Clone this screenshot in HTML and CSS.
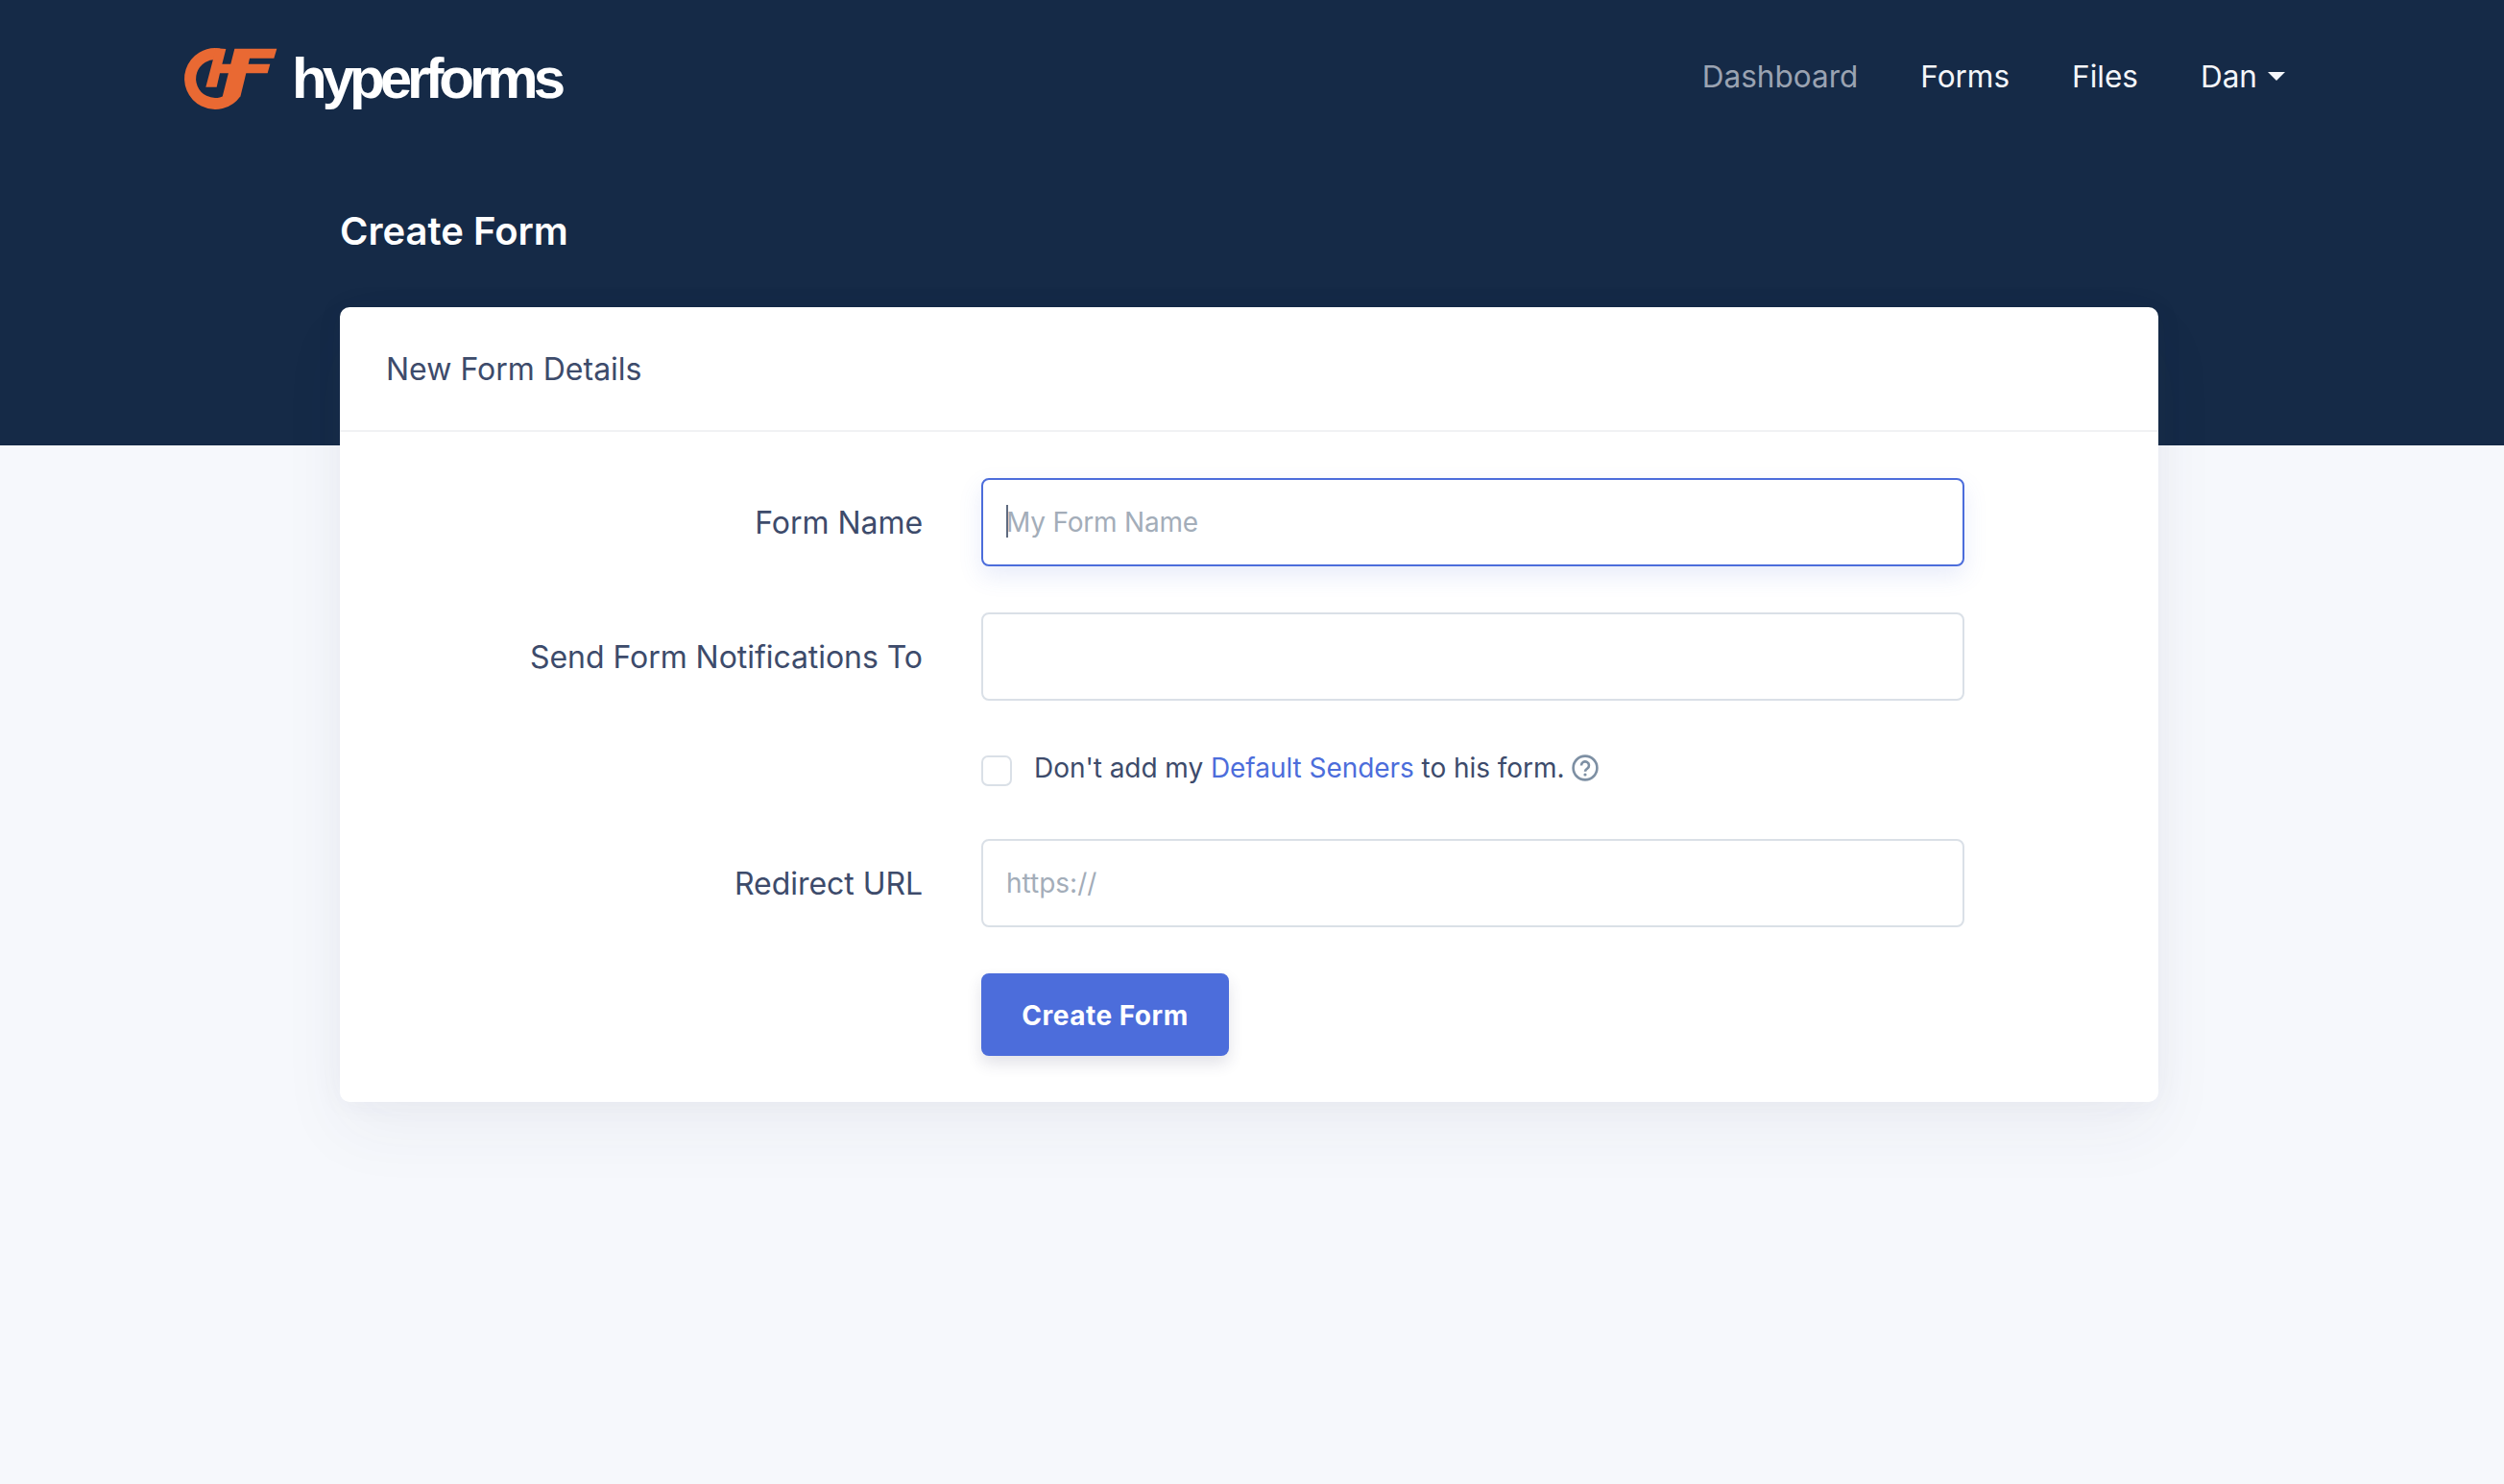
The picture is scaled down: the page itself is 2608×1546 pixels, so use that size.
FILE: index.html
```html
<!DOCTYPE html>
<html lang="en">
<head>
  <meta charset="UTF-8">
  <meta name="viewport" content="width=device-width, initial-scale=1.0">
  <title>Create Form - hyperforms</title>
  <link rel="stylesheet" href="styles.css">
</head>
<body>
  <header class="hero">
    <nav class="topbar">
      <a class="brand" href="#">
        <svg class="brand-mark" viewBox="0 0 330 222" aria-hidden="true">
          <path class="mark-stroke" d="M130 37 A78 78 0 1 0 181 159"/>
          <path class="mark-fill" d="M120 19 L151 21 L139 68 L178 68 L170 97 L132 97 L122 140 L88 140 Z"/>
          <path class="mark-fill" d="M178 20 L310 20 L301 50 L225 50 L221 68 L289 68 L281 97 L214 97 L196 170 L140 170 Z"/>
        </svg>
        <span class="brand-name">hyperforms</span>
      </a>
      <ul class="nav-links">
        <li><a class="nav-link muted" href="#">Dashboard</a></li>
        <li><a class="nav-link" href="#">Forms</a></li>
        <li><a class="nav-link" href="#">Files</a></li>
        <li><a class="nav-link dropdown" href="#">Dan</a></li>
      </ul>
    </nav>
    <h1 class="page-title">Create Form</h1>
  </header>

  <main class="card">
    <div class="card-header">New Form Details</div>
    <form class="card-body">
      <div class="form-row">
        <label class="form-label" for="form-name">Form Name</label>
        <div class="field">
          <input class="form-input focused" type="text" id="form-name" placeholder="My Form Name">
          <span class="caret"></span>
        </div>
      </div>
      <div class="form-row">
        <label class="form-label" for="notify-to">Send Form Notifications To</label>
        <input class="form-input" type="text" id="notify-to">
      </div>
      <div class="form-row">
        <div class="check-row">
          <input class="check" type="checkbox" id="no-senders">
          <label for="no-senders">Don't add my <a href="#">Default Senders</a> to his form.</label>
          <svg class="help-icon" viewBox="0 0 28 28" aria-hidden="true">
            <circle cx="14" cy="14" r="12.4"/>
            <path d="M10 11.4a4 4 0 1 1 6.2 3.3c-1.5.9-2.2 1.4-2.2 3"/>
            <circle class="dot" cx="14" cy="21" r="1.6"/>
          </svg>
        </div>
      </div>
      <div class="form-row">
        <label class="form-label" for="redirect-url">Redirect URL</label>
        <input class="form-input" type="text" id="redirect-url" placeholder="https://">
      </div>
      <div class="form-row last">
        <button class="submit-btn" type="button">Create Form</button>
      </div>
    </form>
  </main>
</body>
</html>
```

FILE: styles.css
```css
body {
  margin: 0;
  min-height: 1546px;
  background-color: #f6f8fc;
  color: #3d4b6b;
  font-family: Inter, "Noto Sans", sans-serif;
  font-size: 32px;
  overflow: hidden;
}

a {
  text-decoration: none;
}

.hero {
  height: 464px;
  box-sizing: border-box;
  background-color: #152a47;
  color: white;
}

.topbar {
  display: flex;
  align-items: center;
  justify-content: space-between;
  height: 162px;
  padding: 0 228px 0 185px;
}

.brand {
  display: flex;
  align-items: center;
  gap: 9px;
  color: white;
}

.brand-mark {
  width: 110px;
  height: 74px;
}

.mark-stroke {
  fill: none;
  stroke: #e96933;
  stroke-width: 36;
}

.mark-fill {
  fill: #e96933;
}

.brand-name {
  font-family: "Liberation Sans", Arial, sans-serif;
  font-size: 60px;
  font-weight: bold;
  letter-spacing: -5px;
}

.nav-links {
  display: flex;
  gap: 65px;
  margin: 0 0 3px;
  padding: 0;
  list-style: none;
  font-size: 31.5px;
}

.nav-link {
  color: #f4f6fa;
}

.nav-link.muted {
  color: #9aa3b2;
}

.dropdown::after {
  content: "";
  display: inline-block;
  margin-left: 11px;
  vertical-align: 7px;
  border-top: 9px solid #f4f6fa;
  border-left: 9.5px solid transparent;
  border-right: 9.5px solid transparent;
}

.page-title {
  margin: 54px 0 0 354px;
  font-size: 40px;
  font-weight: 600;
  line-height: 50px;
}

.card {
  width: 1894px;
  margin: -144px 0 0 354px;
  position: relative;
  background-color: white;
  border-radius: 10px;
  box-shadow: 0 30px 70px rgba(50, 50, 93, 0.05), 0 0 30px rgba(50, 50, 93, 0.05);
}

.card-header {
  height: 128px;
  padding: 0 48px;
  line-height: 130px;
  border-bottom: 2px solid #f1f2f4;
}

.card-body {
  padding: 48px;
}

.form-row {
  display: grid;
  grid-template-columns: 559px 1024px;
  column-gap: 61px;
  align-items: center;
  margin-bottom: 48px;
}

.form-row.last {
  margin-bottom: 0;
}

.form-label {
  text-align: right;
  letter-spacing: -0.05px;
}

.field {
  position: relative;
}

.form-input {
  display: block;
  width: 100%;
  height: 92px;
  box-sizing: border-box;
  padding: 0 24px;
  background-color: white;
  border: 2px solid #dae0e7;
  border-radius: 8px;
  color: #3d4b6b;
  font-family: inherit;
  font-size: 28px;
  outline: none;
}

.form-input::placeholder {
  color: #a3adb9;
  opacity: 1;
}

.form-input.focused {
  border-color: #4c6ddb;
  box-shadow: 0 10px 24px rgba(76, 109, 219, 0.13);
  letter-spacing: -0.2px;
}

/* text cursor in the focused field */
.caret {
  position: absolute;
  left: 26px;
  top: 28px;
  width: 1.5px;
  height: 34px;
  background-color: #5f6b80;
}

.check-row {
  grid-column: 2;
  display: flex;
  align-items: center;
  height: 48px;
  box-sizing: border-box;
  padding-bottom: 4px;
  font-size: 28px;
}

.check {
  appearance: none;
  width: 32px;
  height: 32px;
  margin: 6px 23px 0 0;
  box-sizing: border-box;
  background-color: white;
  border: 2px solid #dae0e7;
  border-radius: 7px;
}

.check-row label {
  letter-spacing: -0.05px;
}

.check-row a {
  color: #4c6ddb;
}

.help-icon {
  width: 28px;
  height: 28px;
  margin-left: 8px;
  fill: none;
  stroke: #7d8fa3;
  stroke-width: 2.6;
}

.help-icon .dot {
  fill: #7d8fa3;
  stroke: none;
}

.submit-btn {
  grid-column: 2;
  justify-self: start;
  width: 258px;
  height: 86px;
  padding-top: 2px;
  background-color: #4c6ddb;
  border: none;
  border-radius: 8px;
  box-shadow: 0 8px 16px rgba(50, 50, 93, 0.14);
  color: white;
  font-family: inherit;
  font-size: 28px;
  font-weight: 700;
  letter-spacing: 0.5px;
  cursor: pointer;
}
```
